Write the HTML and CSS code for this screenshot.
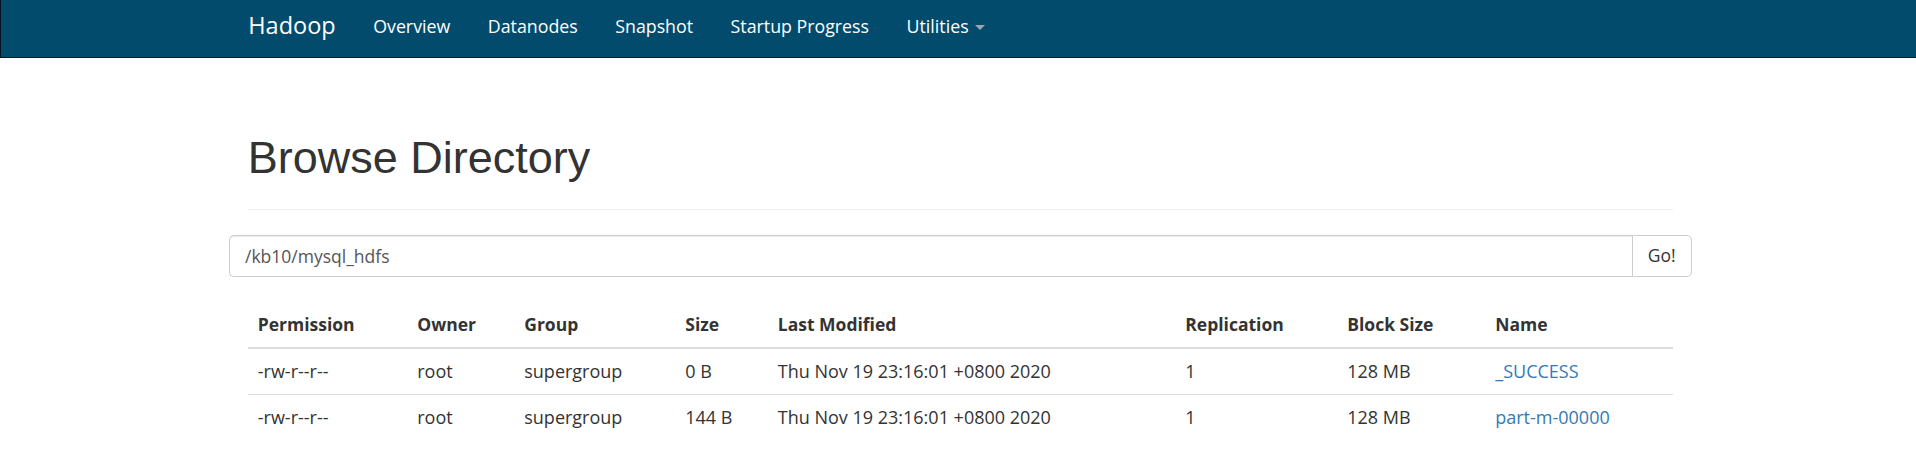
FILE: index.html
```html
<!DOCTYPE html>
<html>
<head>
<meta charset="utf-8">
<title>Browsing HDFS</title>
<link rel="stylesheet" href="styles.css">
</head>
<body>
<header class="navbar">
  <div class="container nav-inner">
    <a class="brand" href="#">Hadoop</a>
    <ul class="nav">
      <li><a href="#">Overview</a></li>
      <li><a href="#">Datanodes</a></li>
      <li><a href="#">Snapshot</a></li>
      <li><a href="#">Startup Progress</a></li>
      <li><a href="#">Utilities <span class="caret"></span></a></li>
    </ul>
  </div>
</header>
<main class="container">
  <div class="page-header">
    <h1>Browse Directory</h1>
  </div>
  <div class="row">
    <div class="input-group">
      <input class="form-control" type="text" value="/kb10/mysql_hdfs">
      <button class="btn" type="button">Go!</button>
    </div>
  </div>
  <div class="spacer"></div>
  <table class="table">
    <thead>
      <tr>
        <th class="c-perm">Permission</th>
        <th class="c-owner">Owner</th>
        <th class="c-group">Group</th>
        <th class="c-size">Size</th>
        <th class="c-mod">Last Modified</th>
        <th class="c-rep">Replication</th>
        <th class="c-block">Block Size</th>
        <th class="c-name">Name</th>
      </tr>
    </thead>
    <tbody>
      <tr>
        <td>-rw-r--r--</td>
        <td>root</td>
        <td>supergroup</td>
        <td>0 B</td>
        <td>Thu Nov 19 23:16:01 +0800 2020</td>
        <td>1</td>
        <td>128 MB</td>
        <td><a href="#">_SUCCESS</a></td>
      </tr>
      <tr>
        <td>-rw-r--r--</td>
        <td>root</td>
        <td>supergroup</td>
        <td>144 B</td>
        <td>Thu Nov 19 23:16:01 +0800 2020</td>
        <td>1</td>
        <td>128 MB</td>
        <td><a href="#">part-m-00000</a></td>
      </tr>
    </tbody>
  </table>
</main>
</body>
</html>
```
FILE: styles.css
```css
* { box-sizing: border-box; }
html, body { margin: 0; padding: 0; }
body {
  font-family: "Open Sans", "Noto Sans", sans-serif;
  font-size: 17.5px;
  line-height: 25px;
  color: #333;
  background: #fff;
  overflow: hidden;
}
a { color: #337ab7; text-decoration: none; }

.container {
  width: 1462.5px;
  margin: 0 0 0 calc(50% - 729px);
  padding: 0 18.75px;
}

.navbar {
  height: 58px;
  background: #024b6d;
  border-bottom: 1px solid #061621;
  border-left: 1px solid #061621;
}
.nav-inner {
  display: flex;
  align-items: center;
  height: 57px;
  padding-bottom: 5px;
}
.brand {
  color: #fff;
  font-size: 23.5px;
  margin-left: -18.75px;
  padding: 0 18.75px;
  line-height: 30px;
  margin-top: -2px;
}
.nav {
  display: flex;
  list-style: none;
  margin: 0;
  padding: 0;
}
.nav a {
  display: block;
  color: #fff;
  font-size: 17.8px;
  padding: 0 18.75px;
  line-height: 25px;
}
.caret {
  display: inline-block;
  width: 0;
  height: 0;
  margin-left: 2px;
  vertical-align: middle;
  border-top: 5px solid #9aa7ae;
  border-left: 5px solid transparent;
  border-right: 5px solid transparent;
}

.page-header {
  margin: 50px 0 25px;
  padding-bottom: 13.5px;
  border-bottom: 1px solid #eee;
  display: flow-root;
}
.page-header h1 {
  font-family: "Liberation Sans", Arial, sans-serif;
  font-weight: 400;
  font-size: 45px;
  line-height: 49.5px;
  margin: 25px 0 12.5px;
  color: #333;
}

.row { margin: 0 -18.75px; }
.input-group {
  display: flex;
  height: 42.5px;
}
.form-control {
  flex: 1;
  height: 42.5px;
  border: 1px solid #ccc;
  border-right: 0;
  border-radius: 5px 0 0 5px;
  padding: 0 15px;
  font: inherit;
  font-size: 17.5px;
  color: #555;
  box-shadow: inset 0 1px 1px rgba(0,0,0,.075);
  outline: none;
}
.btn {
  width: 59.5px;
  height: 42.5px;
  border: 1px solid #ccc;
  border-radius: 0 5px 5px 0;
  background: #fff;
  font: inherit;
  font-size: 17.5px;
  color: #333;
  padding: 0;
}
.spacer { height: 25px; }

.table {
  width: 1425px;
  border-collapse: collapse;
  table-layout: fixed;
}
.table th, .table td {
  text-align: left;
  padding: 10px;
  line-height: 25px;
  vertical-align: top;
  white-space: nowrap;
}
.table th {
  font-weight: 700;
  font-size: 17.5px;
  border-bottom: 2.5px solid #ddd;
}
.table td {
  font-size: 18px;
  border-top: 1px solid #ddd;
}
.table tbody tr:first-child td { border-top: 0; }

.c-perm { width: 159.5px; }
.c-owner { width: 107px; }
.c-group { width: 161px; }
.c-size { width: 92.5px; }
.c-mod { width: 407.5px; }
.c-rep { width: 162px; }
.c-block { width: 148px; }
.c-name { width: 187.5px; }
```
